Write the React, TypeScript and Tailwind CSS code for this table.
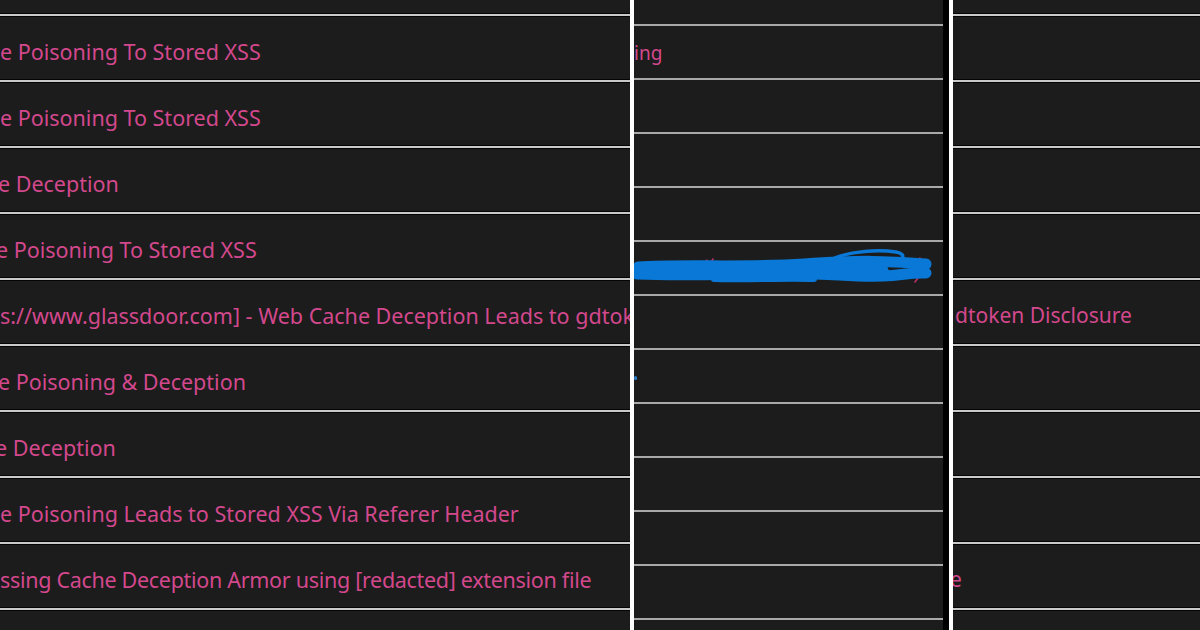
const leftRows = [
  { text: 'e Poisoning To Stored XSS', shift: '' },
  { text: 'e Poisoning To Stored XSS', shift: '' },
  { text: 'e Deception', shift: '-ml-[2px]' },
  { text: 'e Poisoning To Stored XSS', shift: '-ml-[4px]' },
  { text: 's://www.glassdoor.com] - Web Cache Deception Leads to gdtoken Disclosure', shift: '' },
  { text: 'e Poisoning & Deception', shift: '-ml-[2px]' },
  { text: 'e Deception', shift: '-ml-[5px]' },
  { text: 'e Poisoning Leads to Stored XSS Via Referer Header', shift: '' },
  { text: 'ssing Cache Deception Armor using [redacted] extension file', shift: 'tracking-[-0.3px]' },
];

const rightRows = ['', '', '', '', 'dtoken Disclosure', '', '', '', 'e'];

function Separator() {
  return (
    <div className="h-[4px] shrink-0 border-y border-[#050505] bg-[#c9c9c9]" />
  );
}

function Scribble() {
  return (
    <svg
      className="absolute left-0 top-0 h-[52px] w-[309px]"
      viewBox="0 0 309 52"
      fill="none"
      strokeLinecap="round"
      strokeLinejoin="round"
    >
      <path d="M70 22 l3 -4 M76 22 l3 -5 M286 16 l2 4 M284 36 l-3 4" stroke="#c0306a" strokeWidth={1.5} />
      <path d="M4 25 C50 22 110 26 170 22 S250 19 292 22" stroke="#0a78d6" strokeWidth={11} />
      <path d="M3 32 C70 35 140 29 205 33 S265 30 292 31" stroke="#0a78d6" strokeWidth={11} />
      <path d="M40 28 C110 31 170 25 250 28" stroke="#0a78d6" strokeWidth={9} />
      <path d="M80 37 C110 38 150 36 180 37" stroke="#0a78d6" strokeWidth={6} />
      <path d="M190 24 C200 10 240 7 262 10 C274 12 270 20 250 22 C234 24 220 24 208 23" stroke="#0a78d6" strokeWidth={3.5} />
    </svg>
  );
}

export default function App() {
  return (
    <div
      className="flex h-[630px] w-[1200px] overflow-hidden bg-[#1c1c1c] text-[21.5px] text-[#d3488d]"
      style={{ fontFamily: '"Noto Sans", "Open Sans", sans-serif' }}
    >
      {/* left crop */}
      <div className="flex w-[630px] shrink-0 flex-col overflow-hidden">
        <div className="h-[13px] shrink-0" />
        {leftRows.map((row, i) => (
          <div key={i} className="flex shrink-0 flex-col">
            <Separator />
            <div className="flex h-[62px] items-center overflow-hidden pt-[8px]">
              <span className={`whitespace-nowrap ${row.shift}`}>{row.text}</span>
            </div>
          </div>
        ))}
        <Separator />
      </div>

      <div className="w-[4px] shrink-0 bg-white" />

      {/* middle crop */}
      <div className="flex w-[309px] shrink-0 flex-col overflow-hidden">
        <div className="h-[24px] shrink-0" />
        {Array.from({ length: 11 }).map((_, i) => (
          <div key={i} className="flex shrink-0 flex-col">
            <div className="h-[2px] bg-[#a9a9a9]" />
            <div className="relative flex h-[52px] items-center pt-[3px]">
              {i === 0 && <span className="whitespace-nowrap text-[19px]">ing</span>}
              {i === 4 && <Scribble />}
              {i === 6 && <div className="h-[4px] w-[3px] rounded-full bg-[#2a7fd0]" />}
            </div>
          </div>
        ))}
        <div className="h-[2px] bg-[#a9a9a9]" />
      </div>

      <div className="w-[6px] shrink-0 bg-black" />
      <div className="w-[4px] shrink-0 bg-white" />

      {/* right crop */}
      <div className="flex min-w-0 flex-1 flex-col overflow-hidden text-[21px]">
        <div className="h-[13px] shrink-0" />
        {rightRows.map((text, i) => (
          <div key={i} className="flex shrink-0 flex-col">
            <Separator />
            <div className="flex h-[62px] items-center overflow-hidden pt-[8px] pl-[2px]">
              <span className={`whitespace-nowrap ${i === 8 ? '-ml-[5px]' : ''}`}>{text}</span>
            </div>
          </div>
        ))}
        <Separator />
      </div>
    </div>
  );
}
